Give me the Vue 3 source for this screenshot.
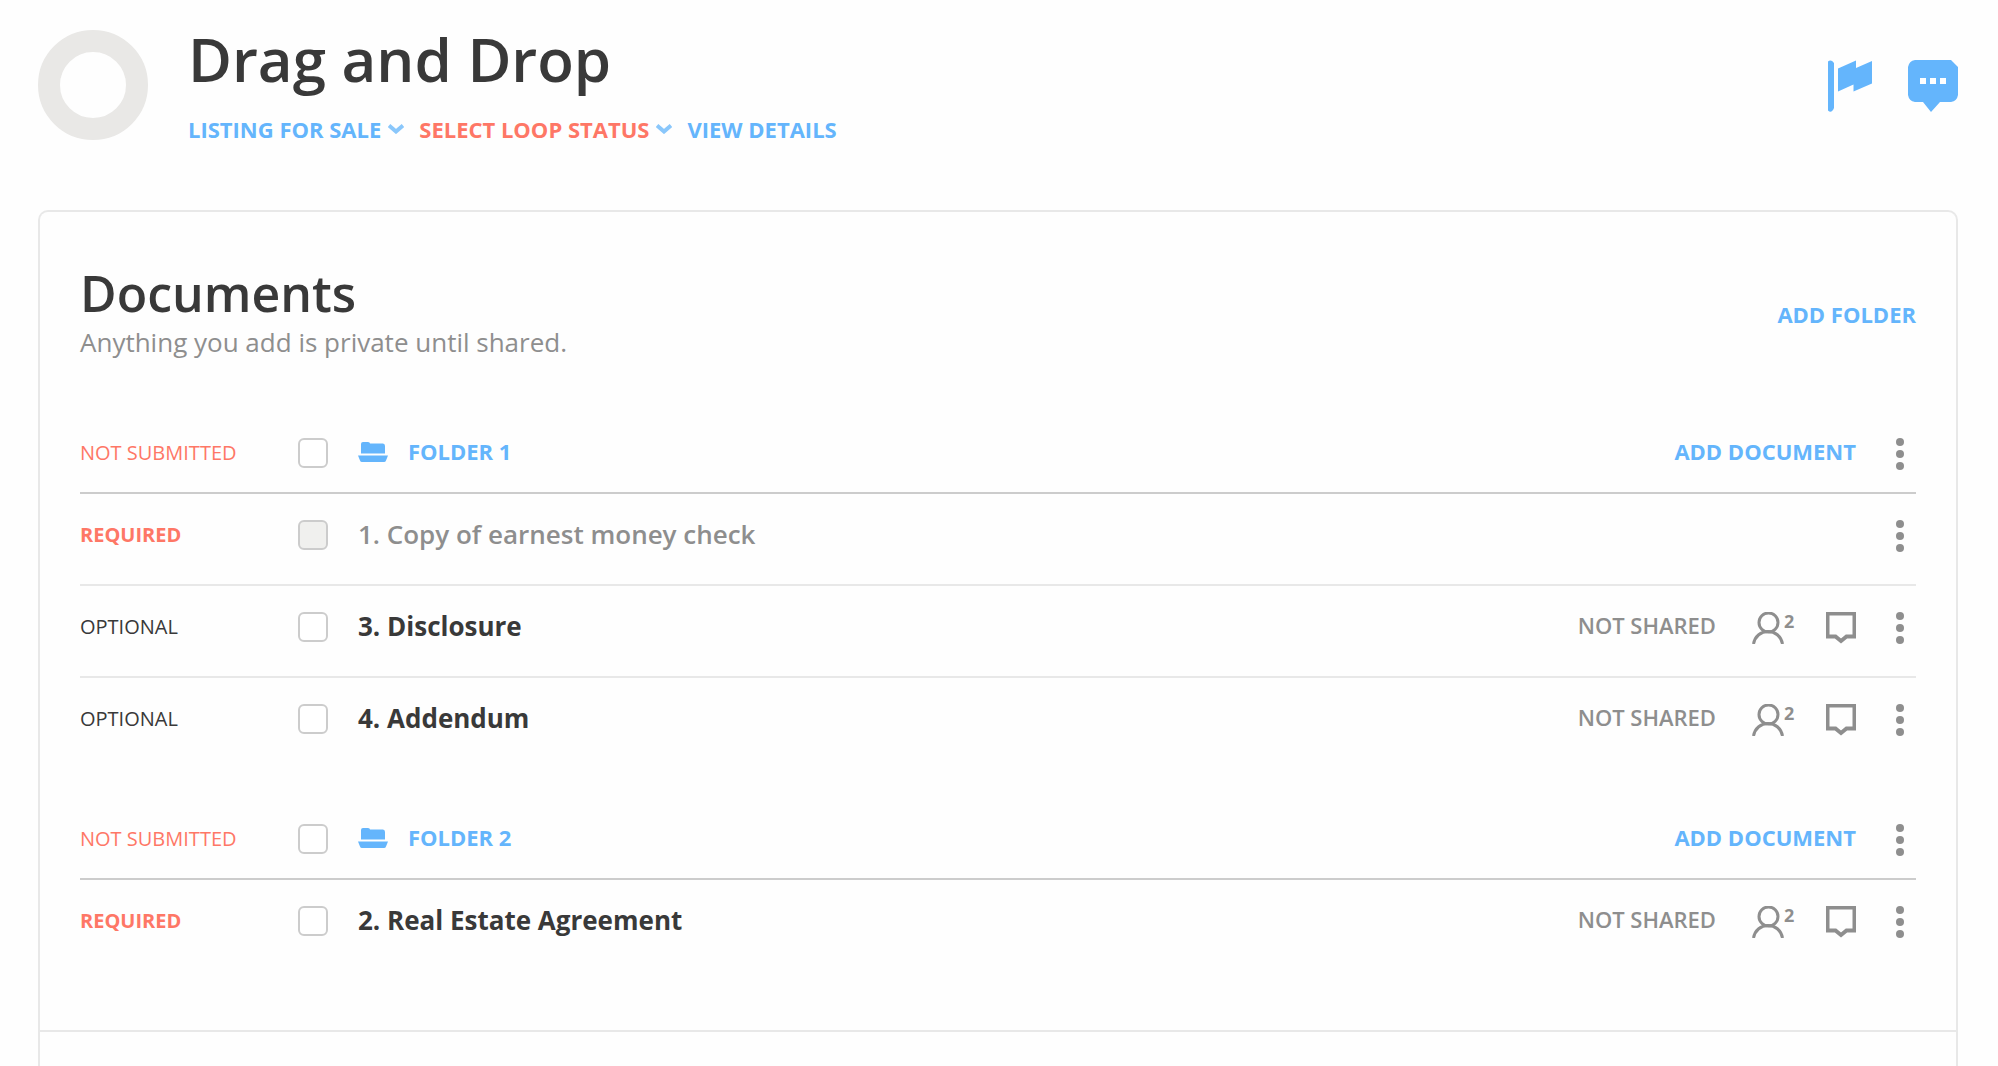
<script setup>
import { ref } from 'vue'

const folders = ref([
  {
    id: 1,
    name: 'Folder 1',
    status: 'Not submitted',
    documents: [
      { id: 1, title: '1. Copy of earnest money check', need: 'Required', placeholder: true },
      { id: 3, title: '3. Disclosure', need: 'Optional', people: 2 },
      { id: 4, title: '4. Addendum', need: 'Optional', people: 2 }
    ]
  },
  {
    id: 2,
    name: 'Folder 2',
    status: 'Not submitted',
    documents: [
      { id: 2, title: '2. Real Estate Agreement', need: 'Required', people: 2 }
    ]
  }
])
</script>

<template>
  <div class="page">
    <header class="loop">
      <div class="ring"></div>
      <div class="loop-info">
        <h1>Drag and Drop</h1>
        <nav class="loop-links">
          <button type="button" class="action menu">
            Listing for sale
            <svg class="chevron" width="16" height="10" viewBox="0 0 16 10" aria-hidden="true"><path d="M1 1.500 8 7.500l7-6" /></svg>
          </button>
          <button type="button" class="action menu alert">
            Select loop status
            <svg class="chevron" width="16" height="10" viewBox="0 0 16 10" aria-hidden="true"><path d="M1 1.500 8 7.500l7-6" /></svg>
          </button>
          <a href="#details" class="action">View details</a>
        </nav>
      </div>
      <div class="loop-tools">
        <button type="button" aria-label="Flag">
          <svg width="44" height="52" viewBox="0 0 44 52" aria-hidden="true">
            <path d="M0 1.500Q3 -1 6 3V48Q3.500 54 0 50.500Z" />
            <path d="M10 8.500 28 .5V8L44 1V23.500L25.500 31.500V24.500L10 31.500Z" />
          </svg>
        </button>
        <button type="button" aria-label="Messages">
          <svg width="50" height="52" viewBox="0 0 50 52" aria-hidden="true">
            <path d="M7 0H43L50 7V35Q49 41 43 42H32L23 52 15 42H7Q1 41 0 35V7Q1 1 7 0Z" />
            <path class="hole" d="M12 18h6v6h-6zM22 18h6v6h-6zM32 18h6v6h-6z" />
          </svg>
        </button>
      </div>
    </header>

    <main class="card">
      <section class="documents">
        <div class="documents-head">
          <div>
            <h2>Documents</h2>
            <p>Anything you add is private until shared.</p>
          </div>
          <button type="button" class="action">Add folder</button>
        </div>

        <section v-for="folder in folders" :key="folder.id" class="folder">
          <div class="row folder-row">
            <span class="label pending">{{ folder.status }}</span>
            <input :id="'folder-' + folder.id" type="checkbox" />
            <label :for="'folder-' + folder.id" class="name action folder-name">
              <svg width="30" height="20" viewBox="0 0 30 20" aria-hidden="true">
                <path d="M3 2Q3 0 5 0H10Q12 0 12 1.500H25Q27 1.500 27 4V11.500H3Z" />
                <path d="M0 13.500H30L28 18.500Q27.500 20 26 20H4Q2.500 20 2 18.500Z" />
              </svg>
              {{ folder.name }}
            </label>
            <button type="button" class="action">Add document</button>
            <button type="button" class="more" aria-label="Folder options">
              <svg width="8" height="32" viewBox="0 0 8 32" aria-hidden="true"><circle cx="4" cy="4" r="4" /><circle cx="4" cy="16" r="4" /><circle cx="4" cy="28" r="4" /></svg>
            </button>
          </div>
          <ul>
            <li v-for="doc in folder.documents" :key="doc.id" class="row">
              <span class="label" :class="{ required: doc.need === 'Required' }">{{ doc.need }}</span>
              <input :id="'doc-' + doc.id" type="checkbox" :disabled="doc.placeholder" />
              <label :for="'doc-' + doc.id" class="name" :class="{ placeholder: doc.placeholder }">{{ doc.title }}</label>
              <template v-if="!doc.placeholder">
                <span class="shared">Not shared</span>
                <button type="button" class="people" aria-label="People">
                  <svg width="32" height="32" viewBox="0 0 32 32" aria-hidden="true">
                    <circle cx="16.500" cy="10.500" r="9.500" />
                    <path d="M1.500 32C3 24 9 19.500 16 19.500S29 24 30.500 32" />
                  </svg>
                  <span class="count">{{ doc.people }}</span>
                </button>
                <button type="button" class="note" aria-label="Comments">
                  <svg width="30" height="32" viewBox="0 0 30 32" aria-hidden="true">
                    <path d="M1.500 1.500H28.500V24.500H20.500L15 29 9.500 24.500H1.500Z" />
                  </svg>
                </button>
              </template>
              <button type="button" class="more" aria-label="Document options">
                <svg width="8" height="32" viewBox="0 0 8 32" aria-hidden="true"><circle cx="4" cy="4" r="4" /><circle cx="4" cy="16" r="4" /><circle cx="4" cy="28" r="4" /></svg>
              </button>
            </li>
          </ul>
        </section>
      </section>
    </main>
  </div>
</template>

<style>
body {
  margin: 0;
  background: #fefefe;
}
</style>

<style scoped>
* {
  box-sizing: border-box;
}

.page {
  display: flex;
  flex-direction: column;
  min-height: 100vh;
  padding: 30px 40px 0 38px;
  color: #393939;
  font-family: "Open Sans", "Noto Sans", sans-serif;
}

h1,
h2,
p,
ul {
  margin: 0;
  padding: 0;
}

button {
  flex: none;
  padding: 0;
  border: 0;
  background: none;
  font: inherit;
  cursor: pointer;
}

svg {
  display: block;
  flex: none;
}

.action {
  color: #64b5fc;
  font-size: 22px;
  font-weight: 700;
  line-height: 26px;
  text-decoration: none;
  text-transform: uppercase;
}

.loop {
  display: flex;
  align-items: flex-start;
  height: 180px;
}

.ring {
  flex: none;
  width: 110px;
  height: 110px;
  border: 22px solid #e9e8e6;
  border-radius: 50%;
}

.loop-info {
  flex: 1;
  margin-left: 40px;
}

h1 {
  font-size: 60px;
  font-weight: 600;
  line-height: 58px;
}

.loop-links {
  display: flex;
  gap: 15px;
  margin-top: 28px;
}

.menu {
  display: flex;
  align-items: center;
  gap: 7px;
}

.alert {
  color: #fe7766;
}

.chevron {
  fill: none;
  stroke: #8ac7fb;
  stroke-width: 4;
}

.loop-tools {
  display: flex;
  gap: 36px;
  margin-top: 30px;
  fill: #64b5fc;
}

.hole {
  fill: #fff;
}

.card {
  flex: 1;
  border: 2px solid #e8e8e8;
  border-bottom: 0;
  border-radius: 10px 10px 0 0;
}

.documents {
  padding: 50px 40px 60px;
  border-bottom: 2px solid #e8e8e8;
}

.documents-head {
  display: flex;
  align-items: center;
  justify-content: space-between;
  margin-bottom: 48px;
}

h2 {
  font-size: 50px;
  font-weight: 600;
  line-height: 62px;
}

p {
  padding-bottom: 6px;
  color: #8e8e8e;
  font-size: 26px;
  line-height: 36px;
}

.folder + .folder {
  margin-top: 32px;
}

ul {
  list-style: none;
}

.row {
  display: flex;
  align-items: flex-start;
  padding: 26px 12px 26px 0;
  border-bottom: 2px solid #e8e8e8;
}

li.row {
  min-height: 92px;
}

li.row:last-child {
  min-height: 90px;
  border-bottom: 0;
}

.folder-row {
  height: 80px;
  padding-top: 24px;
  padding-bottom: 0;
  border-bottom-color: #ccc;
}

.label {
  flex: none;
  width: 218px;
  font-size: 20px;
  line-height: 30px;
  text-transform: uppercase;
}

.pending {
  color: #fe7766;
}

.required {
  color: #fe7766;
  font-weight: 700;
}

input {
  appearance: none;
  flex: none;
  width: 30px;
  height: 30px;
  margin: 0 30px 0 0;
  border: 2px solid #ccc;
  border-radius: 6px;
  background: #fff;
}

input:disabled {
  background: #f0f0ee;
}

.name {
  flex: 1;
  font-size: 26px;
  font-weight: 700;
  line-height: 28px;
}

.placeholder {
  color: #8e8e8e;
  font-weight: 600;
}

.folder-name {
  display: flex;
  gap: 20px;
  font-size: 22px;
  line-height: 26px;
}

.folder-name svg {
  margin-top: 4px;
  fill: #64b5fc;
}

.shared {
  color: #8e8e8e;
  font-size: 22px;
  font-weight: 600;
  line-height: 26px;
  text-transform: uppercase;
}

.people {
  display: flex;
  align-items: flex-start;
  width: 42px;
  margin-left: 36px;
}

.people svg,
.note svg {
  fill: none;
  stroke: #8e8e8e;
  stroke-width: 3;
}

.note svg {
  stroke-width: 4;
}

.count {
  color: #8e8e8e;
  font-size: 18px;
  font-weight: 700;
  line-height: 18px;
}

.note {
  margin-left: 32px;
}

.more {
  margin-left: 40px;
  fill: #8e8e8e;
}
</style>
